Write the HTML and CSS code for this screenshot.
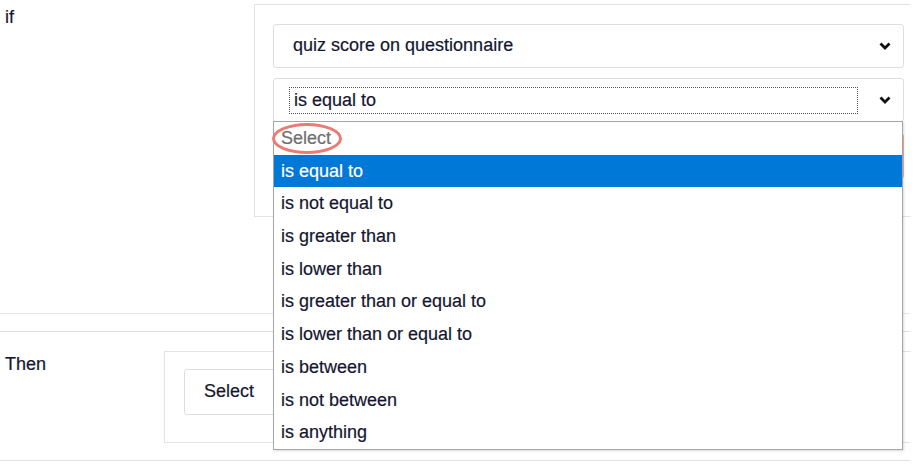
FILE: index.html
```html
<!DOCTYPE html>
<html lang="en">
<head>
<meta charset="utf-8">
<title>Rule editor</title>
<link rel="stylesheet" href="styles.css">
</head>
<body>
<div class="page">
  <section class="rule rule-if">
    <div class="label">if</div>
    <div class="box box-if">
      <div class="select">
        <span class="select-text">quiz score on questionnaire</span>
        <svg class="chevron" width="12" height="8" viewBox="0 0 12 8"><path d="M1.5 1.5 L6 6 L10.5 1.5" fill="none" stroke="#111" stroke-width="2.8"/></svg>
      </div>
      <div class="select select-open">
        <span class="focus-ring">is equal to</span>
        <svg class="chevron" width="12" height="8" viewBox="0 0 12 8"><path d="M1.5 1.5 L6 6 L10.5 1.5" fill="none" stroke="#111" stroke-width="2.8"/></svg>
        <ul class="listbox">
          <li class="option placeholder">Select</li>
          <li class="option selected">is equal to</li>
          <li class="option">is not equal to</li>
          <li class="option">is greater than</li>
          <li class="option">is lower than</li>
          <li class="option">is greater than or equal to</li>
          <li class="option">is lower than or equal to</li>
          <li class="option">is between</li>
          <li class="option">is not between</li>
          <li class="option">is anything</li>
          <li class="highlight-ring"></li>
        </ul>
      </div>
      <div class="value-input invalid"></div>
    </div>
  </section>
  <section class="rule rule-then">
    <div class="label label-then">Then</div>
    <div class="box box-then">
      <div class="select select-then">
        <span class="select-text">Select</span>
      </div>
    </div>
  </section>
</div>
</body>
</html>
```

FILE: styles.css
```css
* { box-sizing: border-box; }

body {
  margin: 0;
  background: #fff;
  font-family: "Liberation Sans", Arial, sans-serif;
  font-size: 18px;
  color: #15152f;
  -webkit-text-stroke: 0.2px currentColor;
}

.page {
  width: 910px;
  height: 471px;
  overflow: hidden;
}

.rule {
  display: grid;
  align-items: start;
}

.rule-if {
  grid-template-columns: 254px 669px;
  height: 314px;
  border-bottom: 1px solid #e6e6e6;
}

.rule-then {
  grid-template-columns: 164px 800px;
  margin-top: 17px;
  padding-bottom: 17px;
  border-top: 1px solid #dedede;
  border-bottom: 1px solid #e3e3e3;
}

.label {
  padding: 7px 0 0 5px;
  line-height: 1.2;
}

.label-then {
  padding-top: 22px;
}

.box {
  border: 1px solid #e3e3e3;
  background: #fff;
}

.box-if {
  margin-top: 4px;
  padding: 19px 18px 37px;
  display: flex;
  flex-direction: column;
  gap: 10px;
}

.box-then {
  margin-top: 19px;
  padding: 17px 19px 27px;
}

.select {
  position: relative;
  width: 631px;
  height: 44px;
  border: 1px solid #dedede;
  border-radius: 3px;
  background: #fff;
  display: flex;
  align-items: center;
  justify-content: space-between;
  padding: 0 12px 0 19px;
  line-height: 1.2;
}

.select-open {
  padding-left: 15px;
}

.focus-ring {
  width: 569px;
  height: 27px;
  border: 1px dotted #55556a;
  padding-left: 4px;
  line-height: 25px;
}

.chevron {
  display: block;
  flex: none;
}

.value-input {
  width: 631px;
  height: 46px;
  margin-top: 1px;
  border: 1px solid #e3e3e3;
  border-radius: 3px;
}

.value-input.invalid {
  border-color: #f4b1a9;
}

.select-then {
  width: 700px;
  height: 46px;
  padding-left: 19px;
}

.listbox {
  position: absolute;
  z-index: 10;
  top: 42px;
  left: -1px;
  width: 630px;
  margin: 0;
  padding: 0;
  list-style: none;
  background: #fff;
  border: 1px solid #a6a6a6;
  box-shadow: 1px 1px 2px rgba(0, 0, 0, 0.15);
}

.option {
  height: 32.7px;
  line-height: 32.7px;
  padding-left: 7px;
  color: #15152f;
  white-space: nowrap;
}

.option.placeholder {
  color: #6e6e6e;
}

.option.selected {
  background: #0078d7;
  color: #fff;
}

.highlight-ring {
  position: absolute;
  left: -2px;
  top: 1px;
  width: 70px;
  height: 31px;
  border: 3px solid #ec7b73;
  border-radius: 50%;
}
```
